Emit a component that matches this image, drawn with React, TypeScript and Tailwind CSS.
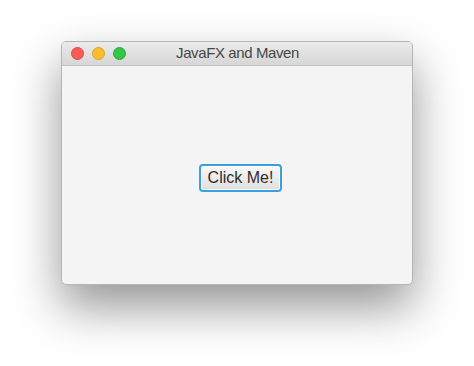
const TrafficLight = ({ color, border }: { color: string; border: string }) => (
  <div className={`size-[13px] rounded-full border ${color} ${border}`}></div>
);

const App = () => {
  return (
    <div className="h-[366px] w-[474px] bg-white pt-[41px] pl-[61px] font-['Liberation_Sans',sans-serif]">
      <div className="flex h-[244px] w-[352px] flex-col overflow-hidden rounded-[5px] border border-[#b5b5b5] bg-[#f4f4f4] shadow-[0_22px_48px_rgba(0,0,0,0.42)]">
        <div className="relative flex h-[24px] shrink-0 items-center border-b border-[#c4c4c4] bg-gradient-to-b from-[#ebebeb] to-[#d6d6d6] px-[9px]">
          <div className="flex items-center gap-[8px]">
            <TrafficLight color="bg-[#fc5c55]" border="border-[#e2463f]" />
            <TrafficLight color="bg-[#fdbc2e]" border="border-[#dfa023]" />
            <TrafficLight color="bg-[#33c748]" border="border-[#27aa35]" />
          </div>
          <div className="absolute inset-0 flex items-center justify-center pb-px pl-px text-[15px] tracking-[-0.4px] text-[#474747]">
            JavaFX and Maven
          </div>
        </div>
        <div className="flex flex-1 items-center justify-center pt-[6px] pl-[7px]">
          <button className="h-[28px] w-[83px] rounded-[4px] border-2 border-[#3aa0dd] bg-gradient-to-b from-[#f8f8f8] to-[#dfdfdf] text-[16px] text-[#2e2e2e] shadow-[inset_0_0_0_1px_#ffffff]">
            Click Me!
          </button>
        </div>
      </div>
    </div>
  );
};

export default App;
